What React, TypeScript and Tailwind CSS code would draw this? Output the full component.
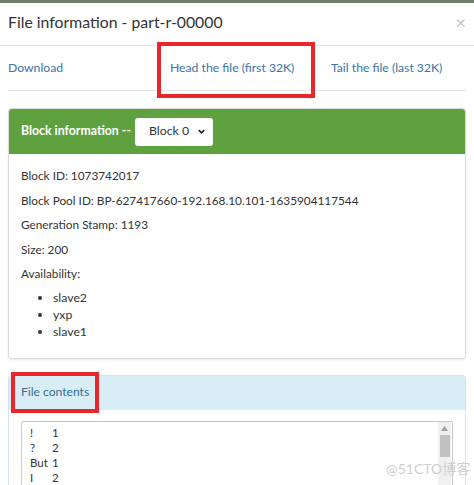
import React from "react";

export default function App() {
  const font = { fontFamily: 'Lato, "Noto Sans", "Noto Sans CJK SC", sans-serif' };
  return (
    <div className="w-[474px] h-[485px] overflow-hidden bg-white relative text-[#333]" style={font}>
      <div className="h-[3px] bg-[#6e7d6c]" />
      <div className="flex items-center justify-between h-[43px] pl-2 pr-[8px] pb-[4px] border-b border-[#e5e5e5]">
        <div className="text-[15.8px] leading-none text-[#333]">File information - part-r-00000</div>
        <div className="text-[18px] leading-none text-[#c4c4c4]">×</div>
      </div>
      <div className="mx-2 flex items-center h-[45px] border-b border-[#e5e5e5] text-[12.2px] text-[#3b73a8]">
        <div className="w-[162px]">Download</div>
        <div className="relative w-[161px]">
          Head the file (first 32K)
          <div className="absolute left-[-13px] top-[-17px] w-[158px] h-[56px] border-[4px] border-[#e8262b]" />
        </div>
        <div>Tail the file (last 32K)</div>
      </div>
      <div className="mx-2 mt-[17px] border border-[#dcdcdc] rounded-[3px] shadow-[0_1px_2px_rgba(0,0,0,0.08)]">
        <div className="bg-[#5fa13e] h-[45px] flex items-center pl-[12px] rounded-t-[3px]">
          <span className="text-white font-bold text-[12.3px]">Block information --</span>
          <div className="ml-[4px] bg-white rounded-[3px] h-[28px] w-[78px] flex items-center justify-between pl-[14px] pr-[7px] text-[12.3px] text-[#333]">
            <span>Block 0</span>
            <svg width="9" height="9" viewBox="0 0 10 10"><path d="M2 3.5 L5 6.5 L8 3.5" fill="none" stroke="#222" strokeWidth="1.8" /></svg>
          </div>
        </div>
        <div className="pl-[12px] pt-[13px] pb-[18px] text-[11.8px] leading-[17px]">
          <div className="mb-[7.5px]">Block ID: 1073742017</div>
          <div className="mb-[7.5px]">Block Pool ID: BP-627417660-192.168.10.101-1635904117544</div>
          <div className="mb-[7.5px]">Generation Stamp: 1193</div>
          <div className="mb-[7.5px]">Size: 200</div>
          <div className="mb-[6.5px]">Availability:</div>
          <ul className="list-disc pl-[32px] leading-[17px] text-[12.3px]">
            <li>slave2</li>
            <li>yxp</li>
            <li>slave1</li>
          </ul>
        </div>
      </div>
      <div className="mx-2 mt-[16px] border border-[#cfe6f2] rounded-[3px]">
        <div className="bg-[#d9edf7] h-[34px] flex items-center pl-[12px] relative">
          <span className="text-[12.1px] text-[#31708f]">File contents</span>
          <div className="absolute left-[2px] top-[-4px] w-[88px] h-[41px] border-[4px] border-[#e8262b]" />
        </div>
        <div className="px-[12px] pt-[11px] h-[100px]">
          <div className="border border-[#c8c8c8] rounded-[2px] h-[90px] flex">
            <div className="flex-1 pl-[8px] pt-[3px] text-[11.5px] leading-[15px]">
              <div className="flex"><span className="w-[22px] shrink-0">!</span><span>1</span></div>
              <div className="flex"><span className="w-[22px] shrink-0">?</span><span>2</span></div>
              <div className="flex"><span className="w-[22px] shrink-0">But</span><span>1</span></div>
              <div className="flex"><span className="w-[22px] shrink-0">I</span><span>2</span></div>
            </div>
            <div className="w-[13px] mr-[1px] bg-[#f0f0f0] flex flex-col items-center pt-[4px]">
              <svg width="7" height="5" viewBox="0 0 7 5"><path d="M0 5 L3.5 0 L7 5 Z" fill="#a0a0a0" /></svg>
              <div className="mt-[4px] w-[10px] h-[22px] bg-[#c1c1c1]" />
            </div>
          </div>
        </div>
      </div>
      <div className="absolute left-[386px] top-[462px] text-[14px] text-[#d0d0d0] leading-none">@51CTO博客</div>
    </div>
  );
}
